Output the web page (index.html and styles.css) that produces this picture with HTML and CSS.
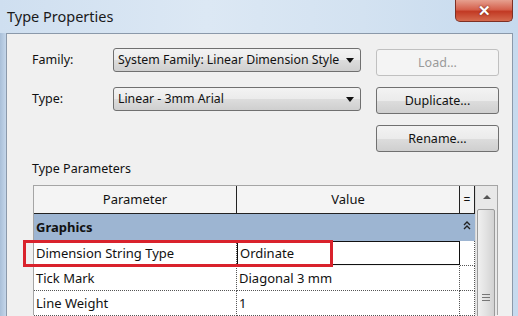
FILE: index.html
```html
<!DOCTYPE html>
<html lang="en">

<head>
    <meta charset="utf-8">
    <title>Type Properties</title>
    <link rel="stylesheet" href="styles.css">
</head>

<body>
    <div class="vindue">
        <div class="titel">
            <h1>Type Properties</h1>
            <button class="luk">&#x2715;</button>
        </div>

        <div class="ramme">
            <div class="dialog">
                <div class="top">
                    <span class="label">Family:</span>
                    <div class="dropdown">System Family: Linear Dimension Style<span class="pil"></span></div>
                    <button class="knap slukket">Load...</button>

                    <span class="label">Type:</span>
                    <div class="dropdown">Linear - 3mm Arial<span class="pil"></span></div>
                    <button class="knap">Duplicate...</button>

                    <span></span>
                    <span></span>
                    <button class="knap">Rename...</button>
                </div>

                <p class="overskrift">Type Parameters</p>

                <div class="tabel">
                    <div class="gitter">
                        <div class="hoved">Parameter</div>
                        <div class="hoved">Value</div>
                        <div class="hoved lig">=</div>

                        <div class="gruppe">Graphics</div>
                        <div class="gruppe fold">
                            <svg width="8" height="9" viewBox="0 0 8 9">
                                <path d="M1 4 L4 1 L7 4 M1 8 L4 5 L7 8" fill="none" stroke="#222" stroke-width="1.4"/>
                            </svg>
                        </div>

                        <div class="celle">Dimension String Type</div>
                        <div class="celle valgt">Ordinate</div>
                        <div class="celle lille"></div>

                        <div class="celle">Tick Mark</div>
                        <div class="celle">Diagonal 3 mm</div>
                        <div class="celle lille"></div>

                        <div class="celle">Line Weight</div>
                        <div class="celle">1</div>
                        <div class="celle lille"></div>
                    </div>

                    <div class="rulle">
                        <div class="op"></div>
                        <div class="greb"><span></span></div>
                    </div>

                    <!-- rød markering oven på rækken -->
                    <div class="markering"></div>
                </div>
            </div>
        </div>
    </div>
</body>

</html>
```

FILE: styles.css
```css
body {
    margin: 0;
    font-family: 'Noto Sans', sans-serif;
    color: #111;
}

.vindue {
    width: 518px;
    height: 316px;
    overflow: hidden;
    background: linear-gradient(90deg, #cfdff0, #dce8f4 40%, #d3e2f1 70%, #c6daee);
}

.titel {
    height: 33px;
    display: flex;
    justify-content: space-between;
    align-items: flex-start;
}

h1 {
    margin: 0;
    padding: 6px 0 0 7px;
    font-size: 14.5px;
    font-weight: normal;
    color: #1a1a1a;
}

.luk {
    width: 58px;
    height: 22px;
    margin-right: 5px;
    border: 1px solid #7e3024;
    border-top: none;
    border-radius: 0 0 5px 5px;
    background: linear-gradient(#e6a08f, #d5614d 45%, #c23a24 55%, #d56a4e);
    color: white;
    font-size: 15px;
    font-weight: bold;
    line-height: 18px;
    text-shadow: 0 0 2px #5a1a10;
    padding: 0;
}

.ramme {
    height: 283px;
    padding-left: 6px;
    background: linear-gradient(90deg, #a9bfd8, #c4d6ea 6px, transparent 6px);
}

.dialog {
    width: 507px;
    height: 283px;
    background-color: #f0f0f0;
    border: 1px solid #8b99aa;
    border-bottom: none;
    padding-left: 25px;
    box-sizing: border-box;
    font-size: 12.5px;
}

.top {
    display: grid;
    grid-template-columns: 81px 248px 138px;
    grid-template-rows: 28px 27px 27px;
    row-gap: 11px;
    padding-top: 14px;
}

.label {
    line-height: 24px;
}

.dropdown {
    height: 24px;
    box-sizing: border-box;
    border: 1px solid #707070;
    border-radius: 3px;
    background: linear-gradient(#f3f3f3, #ebebeb 50%, #dddddd 50%, #cfcfcf);
    padding-left: 4px;
    line-height: 22px;
    position: relative;
    font-size: 12.3px;
}

.pil {
    position: absolute;
    right: 6px;
    top: 9px;
    border-left: 4px solid transparent;
    border-right: 4px solid transparent;
    border-top: 5px solid #111;
}

.knap {
    height: 27px;
    margin-left: 15px;
    border: 1px solid #707070;
    border-radius: 3px;
    background: linear-gradient(#f3f3f3, #ebebeb 50%, #dddddd 50%, #cfcfcf);
    font-family: 'Noto Sans', sans-serif;
    font-size: 12.5px;
    color: #111;
    padding: 0;
}

.slukket {
    border-color: #c0c0c0;
    background: #f4f4f4;
    color: #9a9a9a;
    margin-top: 1px;
}

.overskrift {
    margin: 0;
    padding-top: 8px;
    height: 25px;
    line-height: 18px;
}

.tabel {
    position: relative;
    display: flex;
    margin-left: 1px;
    width: 465px;
    height: 130px;
    box-sizing: border-box;
    border: 1px solid #a5a5a5;
    border-bottom: none;
    font-size: 13px;
}

.gitter {
    display: grid;
    grid-template-columns: 203px 223px 15px;
    grid-auto-rows: 25px;
    grid-template-rows: 28px 27px;
    align-content: start;
}

.hoved {
    background-color: #f4f4f4;
    border-right: 1px solid #222;
    border-bottom: 1px solid #222;
    text-align: center;
    line-height: 27px;
}

.lig {
    font-size: 12px;
}

.gruppe {
    grid-column: 1 / 3;
    background-color: #9db5d2;
    font-weight: bold;
    padding-left: 2px;
    line-height: 26px;
    border-bottom: 1px solid #9db5d2;
}

.fold {
    grid-column: 3;
    padding: 7px 0 0 3px;
    box-sizing: border-box;
    line-height: 0;
}

.celle {
    background-color: white;
    border-right: 1px dotted #555;
    border-bottom: 1px dotted #555;
    padding-left: 2px;
    line-height: 24px;
    white-space: nowrap;
}

.valgt {
    border: 1px solid #111;
    line-height: 22px;
    margin-bottom: 1px;
}

.lille {
    padding: 0;
}

.rulle {
    width: 22px;
    background-color: #e8e8e8;
    border-left: 1px solid #d8d8d8;
    box-sizing: border-box;
}

.op {
    height: 22px;
    position: relative;
}

.op::after {
    content: "";
    position: absolute;
    left: 7px;
    top: 9px;
    border-left: 4px solid transparent;
    border-right: 4px solid transparent;
    border-bottom: 4px solid #555;
}

.greb {
    margin: 1px 0 0 1px;
    width: 18px;
    height: 110px;
    box-sizing: border-box;
    border: 1px solid #9a9a9a;
    border-radius: 2px;
    background: linear-gradient(90deg, #f0f0f0, #e2e2e2 50%, #d2d2d2);
    position: relative;
}

.greb span {
    position: absolute;
    left: 4px;
    top: 84px;
    width: 8px;
    height: 7px;
    border-top: 1px solid #777;
    border-bottom: 1px solid #777;
    box-sizing: border-box;
}

.greb span::after {
    content: "";
    position: absolute;
    left: 0;
    top: 2px;
    width: 8px;
    border-top: 1px solid #777;
}

.markering {
    position: absolute;
    left: -11px;
    top: 54px;
    width: 310px;
    height: 27px;
    box-sizing: border-box;
    border: 3px solid #d9222c;
}
```
